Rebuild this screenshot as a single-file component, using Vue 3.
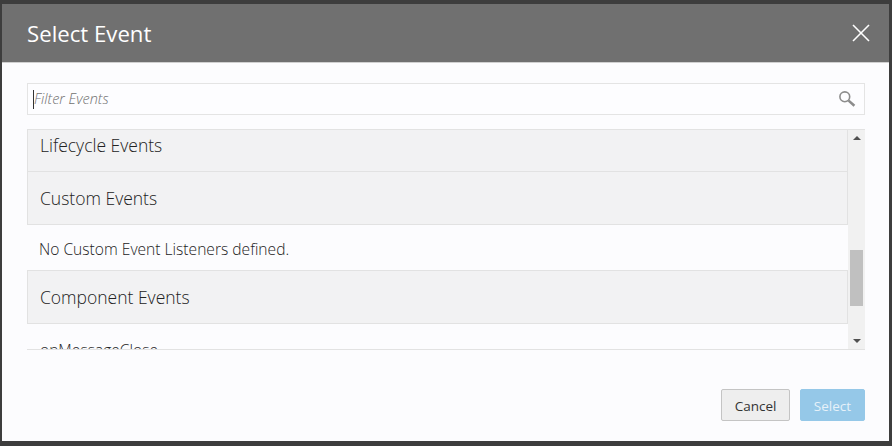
<template>
  <div class="backdrop">
    <div class="dialog">
      <div class="dialog-header">
        <h2 class="dialog-title">Select Event</h2>
        <button class="close-btn" title="Close">
          <svg width="18" height="18" viewBox="0 0 18 18" fill="none" stroke="currentColor" stroke-width="1.6">
            <line x1="1" y1="1" x2="17" y2="17"></line>
            <line x1="17" y1="1" x2="1" y2="17"></line>
          </svg>
        </button>
      </div>
      <div class="dialog-body">
        <div class="filter">
          <span class="caret"></span>
          <span class="filter-placeholder">Filter Events</span>
          <svg class="filter-icon" width="18" height="18" viewBox="0 0 18 18" fill="none" stroke="#8c8c8c">
            <circle cx="6.8" cy="6.8" r="4.9" stroke-width="1.6"></circle>
            <line x1="10.6" y1="10.6" x2="16.4" y2="15.8" stroke-width="2.6"></line>
          </svg>
        </div>
        <div class="list">
          <div class="list-scroll">
            <div class="list-inner">
              <template v-for="row in rows" :key="row.text">
                <div :class="row.type">{{ row.text }}</div>
              </template>
            </div>
          </div>
          <div class="scrollbar">
            <span class="arrow arrow-up"></span>
            <div class="track"><div class="thumb"></div></div>
            <span class="arrow arrow-down"></span>
          </div>
        </div>
      </div>
      <div class="dialog-footer">
        <button class="btn btn-cancel">Cancel</button>
        <button class="btn btn-select">Select</button>
      </div>
    </div>
  </div>
</template>

<script setup>
const rows = [
  { type: 'group', text: 'Lifecycle Events' },
  { type: 'group', text: 'Custom Events' },
  { type: 'message', text: 'No Custom Event Listeners defined.' },
  { type: 'group', text: 'Component Events' },
  { type: 'item', text: 'onMessageClose' }
];
</script>

<style>
html,
body {
  margin: 0;
  background: #3d3d3d;
}
</style>

<style scoped>
.backdrop {
  width: 892px;
  height: 446px;
  box-sizing: border-box;
  padding: 4px 3px 5px 2px;
  background: #3d3d3d;
  overflow: hidden;
  font-family: "Open Sans", "Noto Sans", sans-serif;
}

.dialog {
  height: 100%;
  display: flex;
  flex-direction: column;
  background: #fcfcfe;
}

.dialog-header {
  height: 59px;
  flex: none;
  display: flex;
  align-items: center;
  justify-content: space-between;
  padding: 0 19px 0 25px;
  background: #707070;
  border-bottom: 1px solid #d0d0d0;
  box-sizing: border-box;
}

.dialog-title {
  margin: 0;
  font-size: 22.2px;
  font-weight: 400;
  color: #ffffff;
}

.close-btn {
  display: flex;
  padding: 0;
  background: transparent;
  border: none;
  color: #ffffff;
}

.dialog-body {
  flex: 1;
  display: flex;
  flex-direction: column;
  gap: 14px;
  padding: 20px 24px 0 25px;
}

.filter {
  height: 32px;
  box-sizing: border-box;
  display: flex;
  align-items: center;
  padding: 0 8px 0 5px;
  background: #fdfdff;
  border: 1px solid #e4e4e4;
}

.caret {
  width: 1px;
  height: 19px;
  background: #333333;
}

.filter-placeholder {
  flex: 1;
  padding-bottom: 2px;
  font-size: 14.5px;
  font-style: italic;
  font-weight: 300;
  color: #707070;
}

.list {
  height: 221px;
  display: flex;
  box-sizing: border-box;
  border-top: 1px solid #e2e2e2;
  border-bottom: 1px solid #e2e2e2;
}

.list-scroll {
  flex: 1;
  overflow: hidden;
}

.list-inner {
  margin-top: -12px;
}

.group {
  height: 54px;
  margin-top: -1px;
  box-sizing: border-box;
  display: flex;
  align-items: center;
  padding-left: 12px;
  background: #f2f2f3;
  border: 1px solid #e2e2e2;
  font-size: 17.5px;
  font-weight: 300;
  color: #222222;
}

.message {
  height: 46px;
  box-sizing: border-box;
  display: flex;
  align-items: center;
  padding: 2px 0 0 12px;
  font-size: 15.6px;
  font-weight: 300;
  color: #222222;
}

.item {
  padding: 15px 0 0 13px;
  font-size: 15.6px;
  font-weight: 300;
  color: #222222;
}

.scrollbar {
  width: 17px;
  flex: none;
  display: flex;
  flex-direction: column;
  align-items: center;
  background: #f1f1f1;
}

.arrow {
  width: 0;
  height: 0;
  flex: none;
  border-left: 4px solid transparent;
  border-right: 4px solid transparent;
}

.arrow-up {
  margin: 6px 0 4px;
  border-bottom: 4px solid #505050;
}

.arrow-down {
  margin: 4px 0 6px;
  border-top: 4px solid #505050;
}

.track {
  flex: 1;
  width: 100%;
  display: flex;
  flex-direction: column;
  justify-content: flex-end;
  padding: 0 2px 29px;
  box-sizing: border-box;
}

.thumb {
  height: 56px;
  background: #c0c0c0;
}

.dialog-footer {
  flex: none;
  display: flex;
  justify-content: flex-end;
  gap: 10px;
  padding: 0 24px 20px 0;
}

.btn {
  height: 32px;
  box-sizing: border-box;
  padding: 2px 0 0;
  font-family: inherit;
  font-size: 13.5px;
  border-radius: 2px;
}

.btn-cancel {
  width: 69px;
  color: #333333;
  background: #eeeeee;
  border: 1px solid #c4c4c4;
}

.btn-select {
  width: 65px;
  color: #e6f1f9;
  background: #95c8e8;
  border: 1px solid #95c8e8;
}
</style>
